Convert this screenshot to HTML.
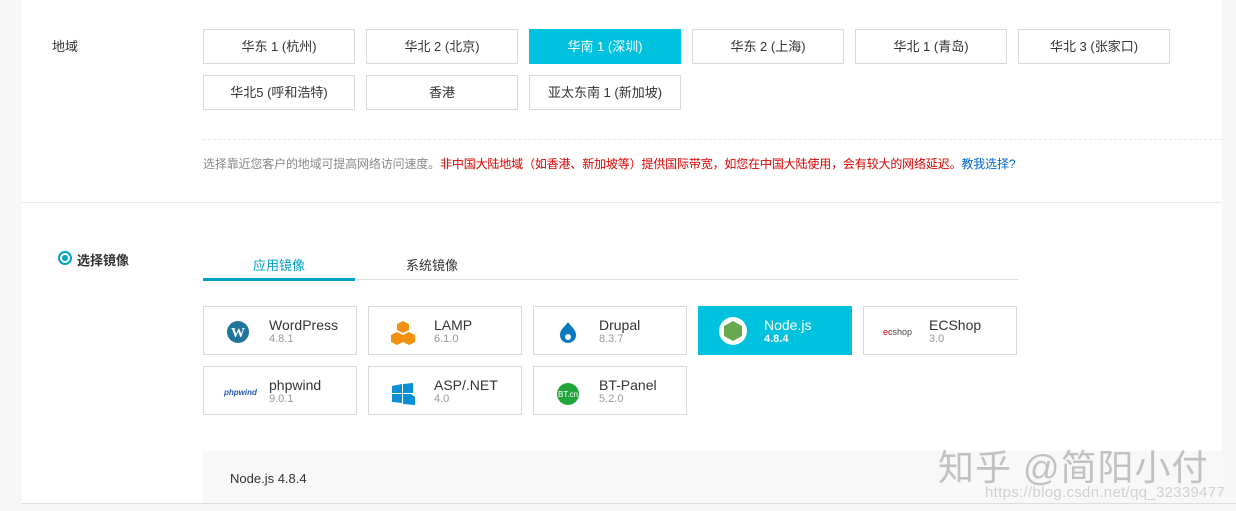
<!DOCTYPE html><html><head><meta charset="utf-8"><style>
body{margin:0;width:1236px;height:511px;background:#f7f7f7;font-family:"Liberation Sans","Noto Sans CJK SC",sans-serif;position:relative;overflow:hidden}
.p{position:absolute;left:22px;top:0;width:1200px;height:503px;background:#fff}
.a{position:absolute}
.b{position:absolute;width:150px;height:33px;border:1px solid #d9d9d9;background:#fff;font-size:13px;color:#333;text-align:center;line-height:33px;box-sizing:content-box}
.b.s{background:#00c1de;border-color:#00c1de;color:#fff}
.c{position:absolute;width:152px;height:47px;border:1px solid #d9d9d9;background:#fff}
.c.s{background:#00c1de;border-color:#00c1de}
.c .n{position:absolute;left:65px;top:11px;font-size:14px;color:#333;line-height:15px}
.c .v{position:absolute;left:65px;top:26px;font-size:11px;color:#999;line-height:12px}
.c.s .n,.c.s .v{color:#fff}
.c svg{position:absolute;left:22px;top:13px}
</style></head><body>
<div class="p"></div>
<div class="a" style="left:52px;top:36px;font-size:13px;color:#333">地域</div>
<div class="b" style="left:203px;top:29px">华东 1 (杭州)</div>
<div class="b" style="left:366px;top:29px">华北 2 (北京)</div>
<div class="b s" style="left:529px;top:29px">华南 1 (深圳)</div>
<div class="b" style="left:692px;top:29px">华东 2 (上海)</div>
<div class="b" style="left:855px;top:29px">华北 1 (青岛)</div>
<div class="b" style="left:1018px;top:29px">华北 3 (张家口)</div>
<div class="b" style="left:203px;top:75px">华北5 (呼和浩特)</div>
<div class="b" style="left:366px;top:75px">香港</div>
<div class="b" style="left:529px;top:75px">亚太东南 1 (新加坡)</div>
<div class="a" style="left:203px;top:139px;width:1019px;border-top:1px dashed #e8e8e8"></div>
<div class="a" style="left:203px;top:155px;font-size:12px;letter-spacing:-0.15px;color:#888;white-space:nowrap">选择靠近您客户的地域可提高网络访问速度。<span style="color:#d00">非中国大陆地域（如香港、新加坡等）提供国际带宽，如您在中国大陆使用，会有较大的网络延迟。</span><span style="color:#06c">教我选择?</span></div>
<div class="a" style="left:22px;top:202px;width:1200px;border-top:1px solid #e8e8e8"></div>
<div class="a" style="left:58px;top:251px;width:10px;height:10px;border:2px solid #00a2c5;border-radius:50%"></div>
<div class="a" style="left:62px;top:255px;width:6px;height:6px;background:#00a2c5;border-radius:50%"></div>
<div class="a" style="left:77px;top:250px;font-size:13px;color:#333;font-weight:bold">选择镜像</div>
<div class="a" style="left:203px;top:255px;width:152px;text-align:center;font-size:13px;color:#00a2c5">应用镜像</div>
<div class="a" style="left:356px;top:255px;width:152px;text-align:center;font-size:13px;color:#333">系统镜像</div>
<div class="a" style="left:203px;top:279px;width:815px;border-top:1px solid #ddd"></div>
<div class="a" style="left:203px;top:278px;width:152px;height:3px;background:#00a2c5"></div>
<div class="c" style="left:203px;top:306px"><svg width="24" height="24"><circle cx="12" cy="12" r="11" fill="#21759b"/><text x="12" y="17" font-size="14" font-weight="bold" text-anchor="middle" fill="#fff" font-family="Liberation Serif">W</text></svg><div class="n">WordPress</div><div class="v">4.8.1</div></div>
<div class="c" style="left:368px;top:306px"><svg width="24" height="26"><path d="M12 1l6 3v6l-6 3-6-3V4zM6 12l6 3v7l-6 3-6-3v-7zM18 12l6 3v7l-6 3-6-3v-7z" fill="#f29111"/></svg><div class="n">LAMP</div><div class="v">6.1.0</div></div>
<div class="c" style="left:533px;top:306px"><svg width="24" height="26"><path d="M12 2c3 5 8 7 8 13a8 8 0 0 1-16 0c0-6 5-8 8-13z" fill="#0678be"/><circle cx="12" cy="17" r="3" fill="#fff"/></svg><div class="n">Drupal</div><div class="v">8.3.7</div></div>
<div class="c s" style="left:698px;top:306px"><svg width="28" height="28" style="left:20px;top:10px"><circle cx="14" cy="14" r="14" fill="#fff"/><path d="M14 4l9 5v10l-9 5-9-5V9z" fill="#6aa84f"/></svg><div class="n">Node.js</div><div class="v" style="font-weight:bold">4.8.4</div></div>
<div class="c" style="left:863px;top:306px"><div class="a" style="left:19px;top:20px;font-size:9px;color:#444"><span style="color:#c00">ec</span>shop</div><div class="n">ECShop</div><div class="v">3.0</div></div>
<div class="c" style="left:203px;top:366px"><div class="a" style="left:20px;top:21px;font-size:8px;color:#235bb0;font-style:italic;font-weight:bold">phpwind</div><div class="n">phpwind</div><div class="v">9.0.1</div></div>
<div class="c" style="left:368px;top:366px"><svg width="26" height="24" style="top:16px"><path d="M1 3l10-2v9H1zM12 1l10-1v10H12zM1 11h10v9L1 19zM12 11h8l4 3v8l-12-1z" fill="#0a8fd8"/></svg><div class="n">ASP/.NET</div><div class="v">4.0</div></div>
<div class="c" style="left:533px;top:366px"><svg width="24" height="24" style="top:15px"><circle cx="12" cy="12" r="11" fill="#20a53a"/><text x="12" y="15" font-size="8" text-anchor="middle" fill="#fff">BT.cn</text></svg><div class="n">BT-Panel</div><div class="v">5.2.0</div></div>
<div class="a" style="left:203px;top:451px;width:1019px;height:52px;background:#f8f8f8"></div>
<div class="a" style="left:230px;top:471px;font-size:13px;color:#333">Node.js 4.8.4</div>
<div class="a" style="left:22px;top:503px;width:1214px;height:1px;background:#ddd"></div>
<div class="a" style="left:938px;top:439px;font-size:36px;letter-spacing:1px;color:rgba(110,110,110,.4);white-space:nowrap">知乎 @简阳小付</div>
<div class="a" style="left:985px;top:484px;font-size:15px;letter-spacing:0.3px;color:rgba(150,150,150,.4);white-space:nowrap">https://blog.csdn.net/qq_32339477</div>
</body></html>
